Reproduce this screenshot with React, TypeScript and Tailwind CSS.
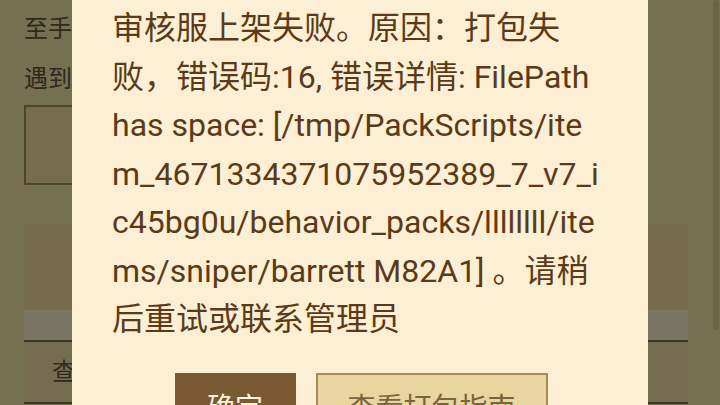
import React from 'react';

const lines = [
  '审核服上架失败。原因：打包失',
  '败，错误码:16, 错误详情: FilePath',
  'has space: [/tmp/PackScripts/ite',
  'm_4671334371075952389_7_v7_i',
  'c45bg0u/behavior_packs/llllllll/ite',
  'ms/sniper/barrett M82A1] 。请稍',
  '后重试或联系管理员',
];

export default function App() {
  return (
    <div
      className="relative w-[720px] h-[405px] overflow-hidden bg-[#747051]"
      style={{ fontFamily: 'Roboto, "Noto Sans CJK SC", sans-serif' }}
    >
      {/* page underneath, already dimmed */}
      <div className="flex flex-col pl-6 pr-8">
        <div className="pt-[4px] text-[24px] leading-[50px] text-[#2e2a1c] whitespace-nowrap">
          <p>至手机端查看打包失败的详细原因与指南，如</p>
          <p>遇到无法解决的问题，请联系管理员反馈。</p>
        </div>
        <div className="mt-[1px] h-[80px] w-[320px] border-2 border-[#4e4530] bg-[#776c50]" />
        <div className="mt-[40px] h-[85px] w-[664px] bg-[#776a4f]" />
        <div className="h-[30px] w-[664px] bg-[#7a7462]" />
        <div className="flex h-[64px] w-[664px] items-center border-y-2 border-[#3d3320] bg-[#766c52] pl-7 text-[24px] text-[#2e2a1c]">
          查看详情
        </div>
      </div>

      {/* scrollbar */}
      <div className="absolute right-[1px] top-0 h-[330px] w-[6px] rounded-full bg-[#6a6347]" />

      {/* dialog */}
      <div className="absolute left-[72px] top-0 w-[576px] h-[460px] bg-[#fdefd3] px-10 pt-[4px]">
        <div className="text-[32px] leading-[48.5px] text-[#5b3b17] whitespace-nowrap">
          {lines.map((l) => (
            <div key={l}>{l}</div>
          ))}
        </div>
        <div className="mt-[29px] flex justify-center gap-5 pl-[2px]">
          <button className="h-[72px] w-[121px] bg-[#7a5a32] pt-[1px] text-[28px] text-[#fdf3de]">
            确定
          </button>
          <button className="h-[72px] w-[232px] border-2 border-[#a68a5b] bg-[#e8d5a0] text-[28px] text-[#7a6440]">
            查看打包指南
          </button>
        </div>
      </div>
    </div>
  );
}
